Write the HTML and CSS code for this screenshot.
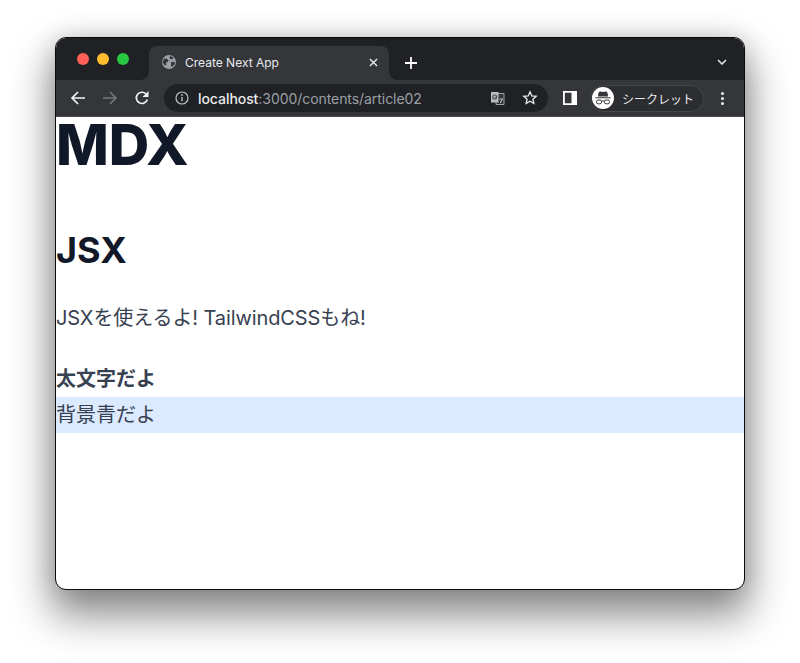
FILE: index.html
```html
<!DOCTYPE html>
<html lang="ja">
<head>
  <meta charset="UTF-8">
  <title>Create Next App</title>
  <link rel="stylesheet" href="styles.css">
</head>
<body>

  <div class="window">
    <!-- tab strip -->
    <div class="tabstrip">
      <div class="traffic">
        <span class="dot red"></span>
        <span class="dot yellow"></span>
        <span class="dot green"></span>
      </div>
      <div class="tab">
        <svg class="favicon" viewBox="0 0 14 14">
          <circle cx="7" cy="7" r="7" fill="#9aa0a6"/>
          <path d="M2 3.500l3 .3 1.600 1.600-1 1.500L4 7.600 4.400 10 3 10.600.6 7.500zM8 1l3.500 1.400-1 1.600-2 .2-1-1.400zM9 7.300l3.400-.5.6 2-2.600 3-1.300-.6z" fill="#35363a"/>
        </svg>
        <span class="tab-title">Create Next App</span>
        <svg class="tab-close" viewBox="0 0 10 10">
          <path d="M1 1l8 8M9 1L1 9" stroke="#e8eaed" stroke-width="1.500"/>
        </svg>
      </div>
      <svg class="new-tab" viewBox="0 0 12 12">
        <path d="M6 0v12M0 6h12" stroke="#fff" stroke-width="1.800"/>
      </svg>
      <svg class="tab-menu" viewBox="0 0 10 6">
        <path d="M1 1l4 4 4-4" fill="none" stroke="#e8eaed" stroke-width="1.500"/>
      </svg>
    </div>

    <!-- toolbar -->
    <div class="toolbar">
      <svg class="nav-icon" viewBox="0 0 16 16">
        <path d="M15 8H2M8 2L2 8l6 6" fill="none" stroke="#f1f3f4" stroke-width="1.700"/>
      </svg>
      <svg class="nav-icon" viewBox="0 0 16 16">
        <path d="M1 8h13M8 2l6 6-6 6" fill="none" stroke="#747579" stroke-width="1.700"/>
      </svg>
      <svg class="nav-icon" viewBox="0 0 16 16">
        <path d="M13.300 9.500A5.600 5.600 0 1 1 12 4" fill="none" stroke="#f1f3f4" stroke-width="1.700"/>
        <path d="M14.500 1v6h-6z" fill="#f1f3f4"/>
      </svg>
      <div class="omnibox">
        <svg class="info" viewBox="0 0 14 14">
          <circle cx="7" cy="7" r="6" fill="none" stroke="#bdc1c6" stroke-width="1.200"/>
          <path d="M7 6v4.200" stroke="#bdc1c6" stroke-width="1.400"/>
          <circle cx="7" cy="4" r=".9" fill="#bdc1c6"/>
        </svg>
        <span class="url"><b>localhost</b>:3000/contents/article02</span>
        <svg class="translate" viewBox="0 0 15 15">
          <path d="M6 2.500h8v11H6z" fill="#35363a" stroke="#9aa0a6"/>
          <path d="M1 1h7.500v10.500H1z" fill="#b9bcc0"/>
          <circle cx="4.700" cy="6" r="2" fill="none" stroke="#4a4b4f" stroke-width="1.100"/>
          <path d="M4.800 6.200h2" stroke="#4a4b4f"/>
          <path d="M9.500 8h3.200M10.300 12l2-4" fill="none" stroke="#c8cbce"/>
        </svg>
        <svg class="star" viewBox="0 0 16 16">
          <path d="M8 1.800l1.800 4.100 4.400.4-3.300 2.900 1 4.300L8 11.200l-3.900 2.300 1-4.300-3.300-2.900 4.400-.4z" fill="none" stroke="#e8eaed" stroke-width="1.300"/>
        </svg>
      </div>
      <svg class="side-panel" viewBox="0 0 14 14">
        <path d="M0 0h14v14H0z" fill="#fff"/>
        <path d="M1.800 1.800h6.700v10.400H1.800z" fill="#35363a"/>
      </svg>
      <div class="profile">
        <svg class="avatar" viewBox="0 0 22 22">
          <circle cx="11" cy="11" r="11" fill="#fff"/>
          <path d="M3.500 10.200h15v1h-15zM6 9.600c0-3 .8-5.100 2-5.100 1 0 2 .6 3 .6s2-.6 3-.6c1.200 0 2 2.100 2 5.100z" fill="#35363a"/>
          <rect x="4.500" y="13" width="5" height="3.800" rx="1.600" fill="none" stroke="#35363a"/>
          <rect x="12.500" y="13" width="5" height="3.800" rx="1.600" fill="none" stroke="#35363a"/>
          <path d="M9.500 14h3" stroke="#35363a"/>
        </svg>
        <span class="profile-name">シークレット</span>
      </div>
      <div class="kebab">
        <span></span>
        <span></span>
        <span></span>
      </div>
    </div>

    <!-- page -->
    <div class="content">
      <h1>MDX</h1>
      <h2>JSX</h2>
      <p class="lead">JSXを使えるよ! TailwindCSSもね!</p>
      <p class="bold">太文字だよ</p>
      <p class="blue">背景青だよ</p>
    </div>
  </div>

</body>
</html>
```

FILE: styles.css
```css
body {
  margin: 0;
  background: #fff;
  font-family: Inter, "Noto Sans CJK JP", sans-serif;
  height: 663px;
  overflow: hidden;
}

.window {
  width: 690px;
  height: 553px;
  margin: 37px 0 0 55px;
  box-sizing: border-box;
  border: 1px solid #0a0a0a;
  border-radius: 11px;
  overflow: hidden;
  background: #fff;
  display: flex;
  flex-direction: column;
  box-shadow: 0 22px 40px 4px rgba(0,0,0,0.45), 0 0 24px rgba(0,0,0,0.14);
}

.tabstrip {
  height: 42px;
  flex: none;
  background: #202124;
  display: flex;
  align-items: flex-end;
}

.traffic {
  display: flex;
  gap: 8px;
  padding: 0 0 15px 21px;
  width: 72px;
}

.dot {
  width: 12px;
  height: 12px;
  border-radius: 50%;
}

.red { background: #ff5f57; }
.yellow { background: #febc2e; }
.green { background: #28c840; }

.tab {
  position: relative;
  width: 240px;
  height: 34px;
  box-sizing: border-box;
  padding: 0 11px 2px 13px;
  background: #35363a;
  border-radius: 8px 8px 0 0;
  display: flex;
  align-items: center;
  font-size: 12px;
  color: #e8eaed;
}

/* concave feet at the bottom of the active tab */
.tab::before,
.tab::after {
  content: "";
  position: absolute;
  bottom: 0;
  width: 8px;
  height: 8px;
}

.tab::before {
  left: -8px;
  background: radial-gradient(circle at 0 0, #202124 7.5px, #35363a 8px);
}

.tab::after {
  right: -8px;
  background: radial-gradient(circle at 100% 0, #202124 7.5px, #35363a 8px);
}

.favicon {
  width: 14px;
  height: 14px;
  margin-right: 9px;
}

.tab-title {
  flex: 1;
}

.tab-close {
  width: 9px;
  height: 9px;
}

.new-tab {
  width: 12px;
  height: 12px;
  margin: 0 0 11px 16px;
}

.tab-menu {
  width: 10px;
  height: 6px;
  margin: 0 17px 15px auto;
}

.toolbar {
  height: 37px;
  flex: none;
  box-sizing: border-box;
  border-bottom: 1px solid #4a4b4f;
  background: #35363a;
  display: flex;
  align-items: center;
  padding: 0 15px 0 14px;
}

.nav-icon {
  width: 16px;
  height: 16px;
  margin-right: 16px;
}

.omnibox {
  width: 384px;
  height: 28px;
  margin-left: -2px;
  box-sizing: border-box;
  padding: 0 10px 0 11px;
  background: #202124;
  border-radius: 14px;
  display: flex;
  align-items: center;
  font-size: 14px;
  color: #9aa0a6;
}

.info {
  width: 14px;
  height: 14px;
  margin-right: 9px;
}

.url {
  flex: 1;
  letter-spacing: -0.06px;
}

.url b {
  font-weight: 500;
  color: #e8eaed;
}

.translate {
  width: 15px;
  height: 15px;
  margin-right: 17px;
}

.star {
  width: 16px;
  height: 16px;
}

.side-panel {
  width: 14px;
  height: 14px;
  margin: 0 13px 0 15px;
}

.profile {
  width: 114px;
  height: 27px;
  box-sizing: border-box;
  padding-left: 1px;
  border: 1px solid #45464a;
  border-radius: 14px;
  background: #2c2d30;
  display: flex;
  align-items: center;
  gap: 8px;
  font-size: 12px;
  color: #e8eaed;
}

.avatar {
  width: 22px;
  height: 22px;
}

.kebab {
  display: flex;
  flex-direction: column;
  gap: 2px;
  margin-left: 17px;
}

.kebab span {
  width: 3px;
  height: 3px;
  border-radius: 50%;
  background: #e8eaed;
}

.content {
  flex: 1;
  color: #374151;
  font-size: 20px;
  line-height: 36px;
}

.content h1 {
  margin: 0 0 57px;
  color: #111827;
  font-size: 56px;
  line-height: 56px;
  font-weight: 800;
}

.content h2 {
  margin: 0 0 30px;
  color: #111827;
  font-size: 36px;
  line-height: 40px;
  font-weight: 700;
}

.content .lead {
  margin: 0 0 25px;
  letter-spacing: -0.1px;
}

.content .bold {
  margin: 0;
  font-weight: 700;
}

.content .blue {
  margin: 0;
  background: #dbeafe;
}
```
